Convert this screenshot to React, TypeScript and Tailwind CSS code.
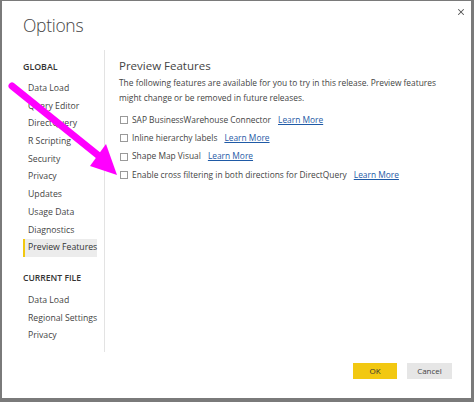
import { X } from "lucide-react";

const globalItems = [
  "Data Load",
  "Query Editor",
  "DirectQuery",
  "R Scripting",
  "Security",
  "Privacy",
  "Updates",
  "Usage Data",
  "Diagnostics",
  "Preview Features",
];

const fileItems = ["Data Load", "Regional Settings", "Privacy"];

const features = [
  "SAP BusinessWarehouse Connector",
  "Inline hierarchy labels",
  "Shape Map Visual",
  "Enable cross filtering in both directions for DirectQuery",
];

const NavItem = ({ label, active }: { label: string; active?: boolean }) => (
  <div
    className={
      active
        ? "h-[17.7px] leading-[17.7px] w-[74px] pl-[3px] border-l-2 border-[#f2c811] bg-[#ececec] text-[#333] whitespace-nowrap"
        : "h-[17.7px] leading-[17.7px] pl-[5px] text-[#444] whitespace-nowrap"
    }
  >
    {label}
  </div>
);

const App = () => {
  return (
    <div
      className="relative w-[474px] h-[402px] border-l-2 border-t border-r-[3px] border-b-4 border-[#7a7a7a] bg-white flex flex-col"
      style={{ fontFamily: '"Open Sans", "Noto Sans", sans-serif' }}
    >
      {/* header */}
      <div className="flex justify-between h-[49px]">
        <h1 className="pl-[21px] pt-[12px] text-[17.5px] tracking-[-0.3px] font-light text-[#444] leading-[24px]">Options</h1>
        <X className="mt-[6px] mr-[5px] w-[10px] h-[10px] text-[#555]" strokeWidth={2.5} />
      </div>

      {/* body */}
      <div className="flex h-[302px]">
        <div className="w-[103px] shrink-0 pl-[21px] pt-[10px] text-[8.7px] border-r border-[#e3e3e3]">
          <div className="font-semibold text-[8.8px] leading-[14px] text-[#333] mb-[6px] whitespace-nowrap">GLOBAL</div>
          {globalItems.map((it) => (
            <NavItem key={it} label={it} active={it === "Preview Features"} />
          ))}
          <div className="font-semibold text-[8.6px] leading-[14px] text-[#333] mt-[14px] mb-[7px] whitespace-nowrap">CURRENT FILE</div>
          {fileItems.map((it) => (
            <NavItem key={it} label={it} />
          ))}
        </div>

        <div className="flex-1 pl-[14px] pt-[7px] text-[#333]">
          <h2 className="text-[11.5px] leading-[18px] text-[#444]">Preview Features</h2>
          <p className="text-[8.4px] leading-[15px] text-[#444] whitespace-nowrap">
            The following features are available for you to try in this release. Preview features
            <br />
            might change or be removed in future releases.
          </p>
          <div className="mt-[6px]">
            {features.map((f) => (
              <div key={f} className="flex items-center h-[18.3px] text-[8.4px] text-[#444] whitespace-nowrap">
                <span className="w-[8px] h-[8px] ml-[1px] border border-[#9a9a9a] bg-white" />
                <span className="ml-[4px]">{f}</span>
                <a className="ml-[7px] text-[#1f5aa6] underline">Learn More</a>
              </div>
            ))}
          </div>
        </div>
      </div>

      {/* footer */}
      <div className="flex justify-end gap-[10px] pt-[11px] pr-[19px] text-[8px]">
        <button className="w-[44px] h-[16px] bg-[#f2c811] text-[#333]">OK</button>
        <button className="w-[45px] h-[16px] bg-[#e6e6e6] text-[#444]">Cancel</button>
      </div>

      {/* annotation arrow */}
      <svg className="absolute -left-[2px] -top-[1px] pointer-events-none" width="474" height="402">
        <line x1="12" y1="86" x2="99" y2="156" stroke="#ff00ff" strokeWidth="7" strokeLinecap="round" />
        <polygon points="106,144 90,166 117,175" fill="#ff00ff" />
      </svg>
    </div>
  );
};

export default App;
